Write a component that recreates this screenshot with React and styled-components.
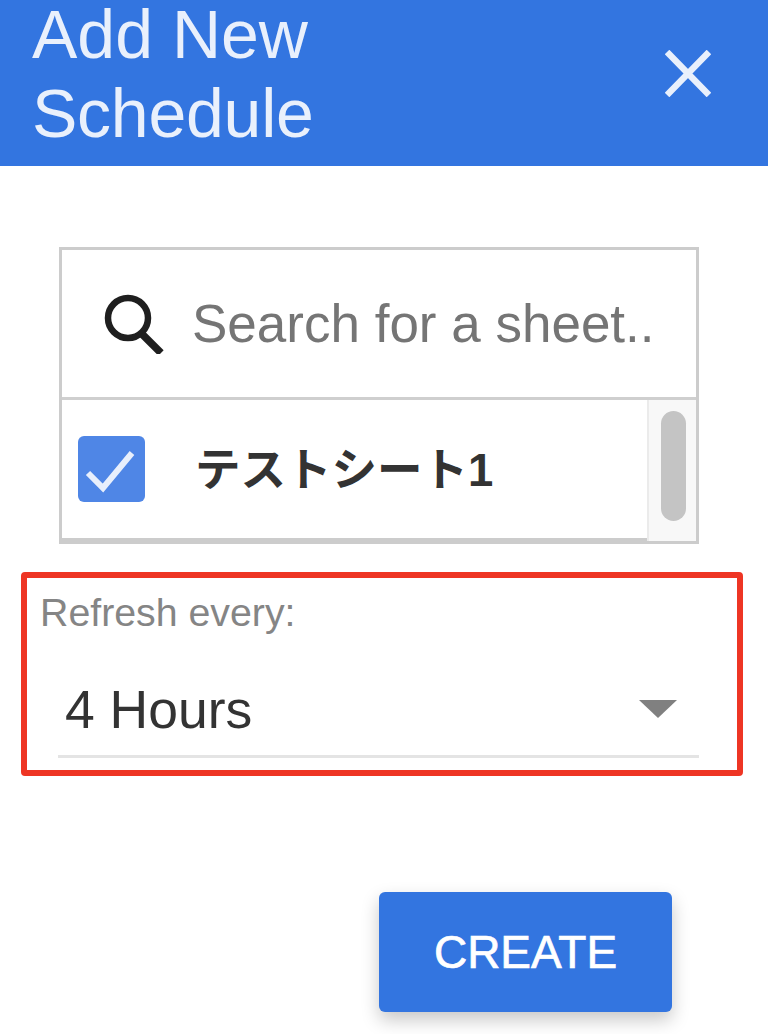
import React from "react";
import styled, { createGlobalStyle } from "styled-components";

const GlobalStyle = createGlobalStyle`
  html, body {
    margin: 0;
    padding: 0;
    background: #fff;
    overflow: hidden;
  }

  * {
    box-sizing: border-box;
  }
`;

const Page = styled.div`
  width: 768px;
  height: 1034px;
  display: flex;
  flex-direction: column;
  font-family: "Liberation Sans", Arial, "Noto Sans CJK JP", sans-serif;
  overflow: hidden;
`;

const Header = styled.header`
  height: 166px;
  flex: none;
  display: flex;
  align-items: center;
  justify-content: space-between;
  padding: 0 57px 19px 32px;
  background: #3375e0;
  color: #e9f0fc;
`;

const Title = styled.h1`
  margin: 0;
  display: flex;
  flex-direction: column;
  gap: 11px;
  font-size: 68px;
  line-height: 68px;
  font-weight: 400;
`;

const TitleLine = styled.span`
  display: block;
  letter-spacing: ${(props) => props.$tracking || "0"};
`;

const CloseButton = styled.button`
  display: flex;
  padding: 0;
  border: 0;
  background: none;
  color: #e9f0fc;
`;

const SheetPanel = styled.section`
  width: 640px;
  height: 297px;
  flex: none;
  margin: 81px 0 0 59px;
  display: flex;
  flex-direction: column;
  border: 3px solid #cccccc;
`;

const SearchRow = styled.div`
  height: 150px;
  flex: none;
  display: flex;
  align-items: center;
  gap: 28px;
  padding-left: 42px;
  border-bottom: 3px solid #cfcfcf;
`;

const SearchInput = styled.input`
  flex: 1;
  min-width: 0;
  padding: 0;
  border: 0;
  outline: 0;
  background: none;
  font-family: inherit;
  font-size: 53px;
  color: #333;

  &::placeholder {
    color: #757575;
    opacity: 1;
  }
`;

const ListArea = styled.div`
  flex: 1;
  display: flex;
  min-height: 0;
`;

const SheetRow = styled.div`
  flex: 1;
  display: flex;
  align-items: center;
  gap: 50px;
  padding-left: 16px;
  border-bottom: 3px solid #cccccc;
`;

const CheckBox = styled.span`
  width: 67px;
  height: 66px;
  flex: none;
  display: flex;
  border-radius: 6px;
  background: #4f86e6;
`;

const SheetName = styled.span`
  margin-top: -6px;
  font-family: "Liberation Sans", "Noto Sans CJK JP", sans-serif;
  font-size: 45.5px;
  font-weight: 700;
  color: #333;
`;

const ScrollTrack = styled.div`
  width: 49px;
  flex: none;
  padding: 11px 10px 0 12px;
  border-left: 2px solid #ebebeb;
  background: #f8f8f8;
`;

const ScrollThumb = styled.div`
  height: 110px;
  border-radius: 14px;
  background: #c4c4c4;
`;

const RefreshBox = styled.section`
  width: 722px;
  flex: none;
  margin: 28px 0 0 21px;
  padding: 12px 0 12px 31px;
  border: 6px solid #ee3524;
  border-radius: 4px;
`;

const FieldLabel = styled.label`
  display: block;
  margin-left: -18px;
  font-size: 39.3px;
  line-height: 44px;
  color: #858585;
`;

const SelectRow = styled.div`
  width: 641px;
  margin-top: 46px;
  display: flex;
  align-items: center;
  justify-content: space-between;
  padding: 0 22px 15px 7px;
  border-bottom: 3px solid #e4e4e4;
`;

const SelectValue = styled.span`
  font-size: 53.5px;
  line-height: 60px;
  color: #333;
`;

const SelectArrow = styled.span`
  width: 0;
  height: 0;
  margin-top: -3px;
  border-left: 19px solid transparent;
  border-right: 19px solid transparent;
  border-top: 18px solid #808080;
`;

const CreateButton = styled.button`
  width: 293px;
  height: 120px;
  flex: none;
  align-self: flex-end;
  margin: 116px 96px 0 0;
  padding: 0;
  border: 0;
  border-radius: 6px;
  background: #3375e0;
  box-shadow: 0 8px 18px rgba(0, 0, 0, 0.22);
  font-family: inherit;
  font-size: 46px;
  color: #fff;
  -webkit-text-stroke: 0.7px #fff;
`;

const CloseIcon = () => (
  <svg width="46" height="47" viewBox="0 0 46 47" fill="none" stroke="currentColor" strokeWidth="6.5">
    <path d="M2 2 L44 45 M44 2 L2 45" />
  </svg>
);

const SearchIcon = () => (
  <svg width="60" height="60" viewBox="0 0 60 60" fill="none" stroke="#1f1f1f" style={{ flex: "none" }}>
    <circle cx="24" cy="24" r="20" strokeWidth="6.5" />
    <path d="M38 40 L57 59" strokeWidth="7.5" />
  </svg>
);

const CheckIcon = () => (
  <svg width="67" height="66" viewBox="0 0 67 66" fill="none" stroke="#e8effc" strokeWidth="6">
    <path d="M10 37 L25 52 L54 17" />
  </svg>
);

export default function App() {
  return (
    <Page>
      <GlobalStyle />
      <Header>
        <Title>
          <TitleLine>Add New</TitleLine>
          <TitleLine $tracking="-0.25px">Schedule</TitleLine>
        </Title>
        <CloseButton aria-label="Close">
          <CloseIcon />
        </CloseButton>
      </Header>
      <SheetPanel>
        <SearchRow>
          <SearchIcon />
          <SearchInput placeholder="Search for a sheet.." />
        </SearchRow>
        <ListArea>
          <SheetRow>
            <CheckBox>
              <CheckIcon />
            </CheckBox>
            <SheetName>テストシート1</SheetName>
          </SheetRow>
          <ScrollTrack>
            <ScrollThumb />
          </ScrollTrack>
        </ListArea>
      </SheetPanel>
      <RefreshBox>
        <FieldLabel>Refresh every:</FieldLabel>
        <SelectRow>
          <SelectValue>4 Hours</SelectValue>
          <SelectArrow />
        </SelectRow>
      </RefreshBox>
      <CreateButton>CREATE</CreateButton>
    </Page>
  );
}
